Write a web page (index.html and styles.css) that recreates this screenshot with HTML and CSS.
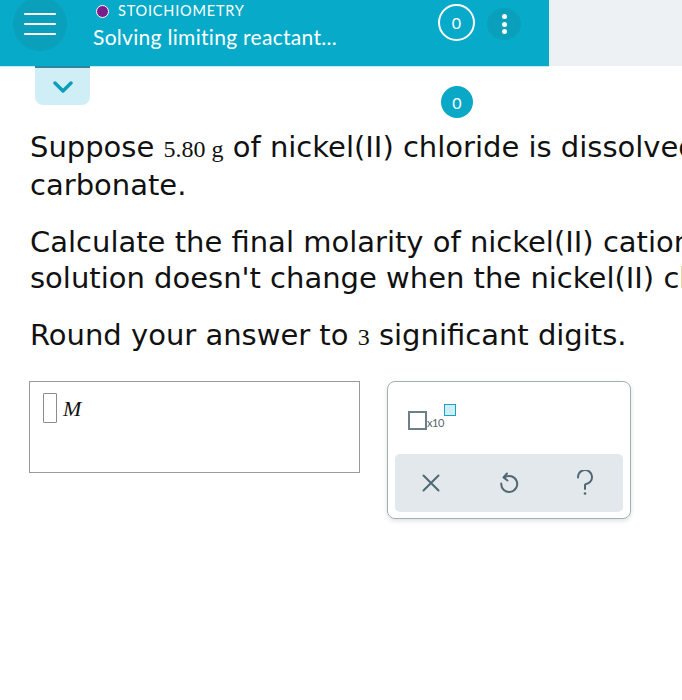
FILE: index.html
```html
<!DOCTYPE html>
<html>
<head>
<meta charset="utf-8">
<link rel="stylesheet" href="styles.css">
</head>
<body>
<div class="top">
  <header class="bar">
    <div class="menu">
      <span class="line"></span><span class="line"></span><span class="line"></span>
    </div>
    <div class="titles">
      <div class="topic"><span class="dot"></span>STOICHIOMETRY</div>
      <div class="title">Solving limiting reactant...</div>
    </div>
    <div class="score">0</div>
    <div class="more"><span></span><span></span><span></span></div>
  </header>
  <div class="side"></div>
</div>
<div class="subbar">
  <div class="tab">
    <svg width="20" height="12" viewBox="0 0 20 12"><path d="M2 2 L10 10 L18 2" fill="none" stroke="#0c9dbb" stroke-width="3.4" stroke-linecap="round" stroke-linejoin="round"/></svg>
  </div>
  <div class="badge">0</div>
</div>
<main class="question">
  <p>Suppose <span class="m">5.80 g</span> of nickel(II) chloride is dissolved in 200. mL of a 0.40 M aqueous solution of sodium<br>carbonate.</p>
  <p>Calculate the final molarity of nickel(II) cation in the solution. You can assume the volume of the<br>solution doesn't change when the nickel(II) chloride is dissolved in it.</p>
  <p>Round your answer to <span class="m">3</span> significant digits.</p>
  <div class="answer">
    <div class="input">
      <span class="slot"></span><span class="unit">M</span>
    </div>
    <div class="panel">
      <div class="tools">
        <div class="sci">
          <span class="base"></span><span class="x10">x10</span><span class="exp"></span>
        </div>
      </div>
      <div class="actions">
        <svg width="20" height="20" viewBox="0 0 20 20"><path d="M2.5 2.5 L17.5 17.5 M17.5 2.5 L2.5 17.5" stroke="#4f6874" stroke-width="2" stroke-linecap="round"/></svg>
        <svg width="22" height="24" viewBox="0 0 22 24"><path d="M7.5 6.5 A8 8 0 1 1 4.2 12.5" fill="none" stroke="#4f6874" stroke-width="2" stroke-linecap="round"/><path d="M10 2.5 L6.5 6.5 L10.5 9.5" fill="none" stroke="#4f6874" stroke-width="2" stroke-linecap="round" stroke-linejoin="round"/></svg>
        <svg width="20" height="26" viewBox="0 0 20 26"><path d="M3 7.5 A7 7 0 1 1 11 14 L10 15 L10 19" fill="none" stroke="#4f6874" stroke-width="2" stroke-linecap="round"/><circle cx="10" cy="23.5" r="1.3" fill="#4f6874"/></svg>
      </div>
    </div>
  </div>
</main>
</body>
</html>
```

FILE: styles.css
```css
html, body {
  margin: 0;
  padding: 0;
  background: #ffffff;
  overflow: hidden;
  width: 682px;
  height: 700px;
}

.top {
  display: flex;
  height: 66px;
}

.bar {
  width: 549px;
  height: 66px;
  background: #07aac8;
  display: flex;
  align-items: flex-start;
  font-family: Lato, "Open Sans", sans-serif;
  color: #ffffff;
  box-shadow: 0 1px 0 #c6e8ef;
}

.side {
  flex: 1;
  background: #eef1f3;
}

.menu {
  width: 54px;
  height: 54px;
  margin: -3px 0 0 13px;
  border-radius: 50%;
  background: #0aa0bb;
  display: flex;
  flex-direction: column;
  align-items: center;
  justify-content: center;
  gap: 7.5px;
}

.menu .line {
  width: 32px;
  height: 2.5px;
  background: #ffffff;
  border-radius: 1px;
}

.titles {
  margin-left: 26px;
  display: flex;
  flex-direction: column;
  width: 327px;
}

.topic {
  font-size: 14.5px;
  letter-spacing: 0.8px;
  line-height: 14px;
  margin-top: 4px;
  display: flex;
  align-items: center;
  margin-left: 3px;
}

.dot {
  width: 11px;
  height: 11px;
  border-radius: 50%;
  background: #7a1d8c;
  border: 1.5px solid #ffffff;
  margin-right: 9px;
}

.title {
  font-size: 21px;
  line-height: 24px;
  margin-top: 7px;
  letter-spacing: 0.3px;
}

.score {
  margin: 4px 0 0 18px;
  width: 33px;
  height: 33px;
  border: 2px solid #ffffff;
  border-radius: 50%;
  display: flex;
  align-items: center;
  justify-content: center;
  font-size: 16px;
}

.more {
  margin: 8px 0 0 12px;
  width: 34px;
  height: 32px;
  border-radius: 50%;
  background: #0aa0bb;
  display: flex;
  flex-direction: column;
  align-items: center;
  justify-content: center;
  gap: 2.5px;
}

.more span {
  width: 5px;
  height: 5px;
  border-radius: 50%;
  background: #ffffff;
}

.subbar {
  height: 54px;
  display: flex;
  align-items: flex-start;
  justify-content: space-between;
  width: 473px;
  box-sizing: border-box;
  padding-left: 35px;
}

.tab {
  width: 55px;
  height: 37px;
  background: #cfeef5;
  border-top: 2px solid #2b8799;
  border-radius: 0 0 8px 8px;
  display: flex;
  align-items: center;
  justify-content: center;
}

.badge {
  margin-top: 20px;
  width: 32px;
  height: 32px;
  border-radius: 50%;
  background: #09a8c6;
  color: #ffffff;
  font-family: Lato, sans-serif;
  font-size: 16px;
  display: flex;
  align-items: center;
  justify-content: center;
}

.question {
  padding-left: 30px;
  padding-top: 9px;
  font-family: "DejaVu Sans", Verdana, sans-serif;
  font-size: 29px;
  line-height: 36px;
  color: #111111;
}

.question p {
  margin: 0 0 21px 0;
  white-space: nowrap;
}

.m {
  font-family: "Liberation Serif", "Times New Roman", serif;
  font-size: 24px;
}

.answer {
  margin-top: 26px;
  display: flex;
  align-items: flex-start;
  gap: 27px;
  margin-left: -1px;
}

.input {
  width: 329px;
  height: 90px;
  border: 1px solid #9a9a9a;
  display: flex;
  align-items: flex-start;
}

.slot {
  width: 12px;
  height: 28px;
  border: 1px solid #8c8c8c;
  margin: 11px 0 0 13px;
  border-radius: 1px;
}

.unit {
  font-family: "Liberation Serif", serif;
  font-style: italic;
  font-size: 22px;
  margin: 15px 0 0 6px;
  line-height: 24px;
  color: #111;
}

.panel {
  width: 228px;
  height: 136px;
  border: 1px solid #9fb0b8;
  border-radius: 8px;
  box-shadow: 0 2px 5px rgba(0,0,0,0.12);
  padding: 0 7px;
  display: flex;
  flex-direction: column;
}

.tools {
  height: 72px;
  display: flex;
  align-items: flex-start;
}

.sci {
  margin: 22px 0 0 13px;
  display: flex;
  align-items: flex-start;
}

.sci .base {
  width: 15px;
  height: 15px;
  border: 2px solid #6d7f88;
  margin-top: 7px;
}

.sci .x10 {
  font-family: Lato, "Open Sans", sans-serif;
  font-size: 11px;
  line-height: 12px;
  color: #55666e;
  margin-top: 13px;
  letter-spacing: -0.4px;
}

.sci .exp {
  width: 10px;
  height: 10px;
  border: 1.5px solid #18a3bd;
  background: #cdeef6;
}

.actions {
  height: 58px;
  background: #e2e8eb;
  border-radius: 5px;
  display: flex;
  align-items: center;
  justify-content: space-between;
  padding: 0 28px 0 26px;
}
```
